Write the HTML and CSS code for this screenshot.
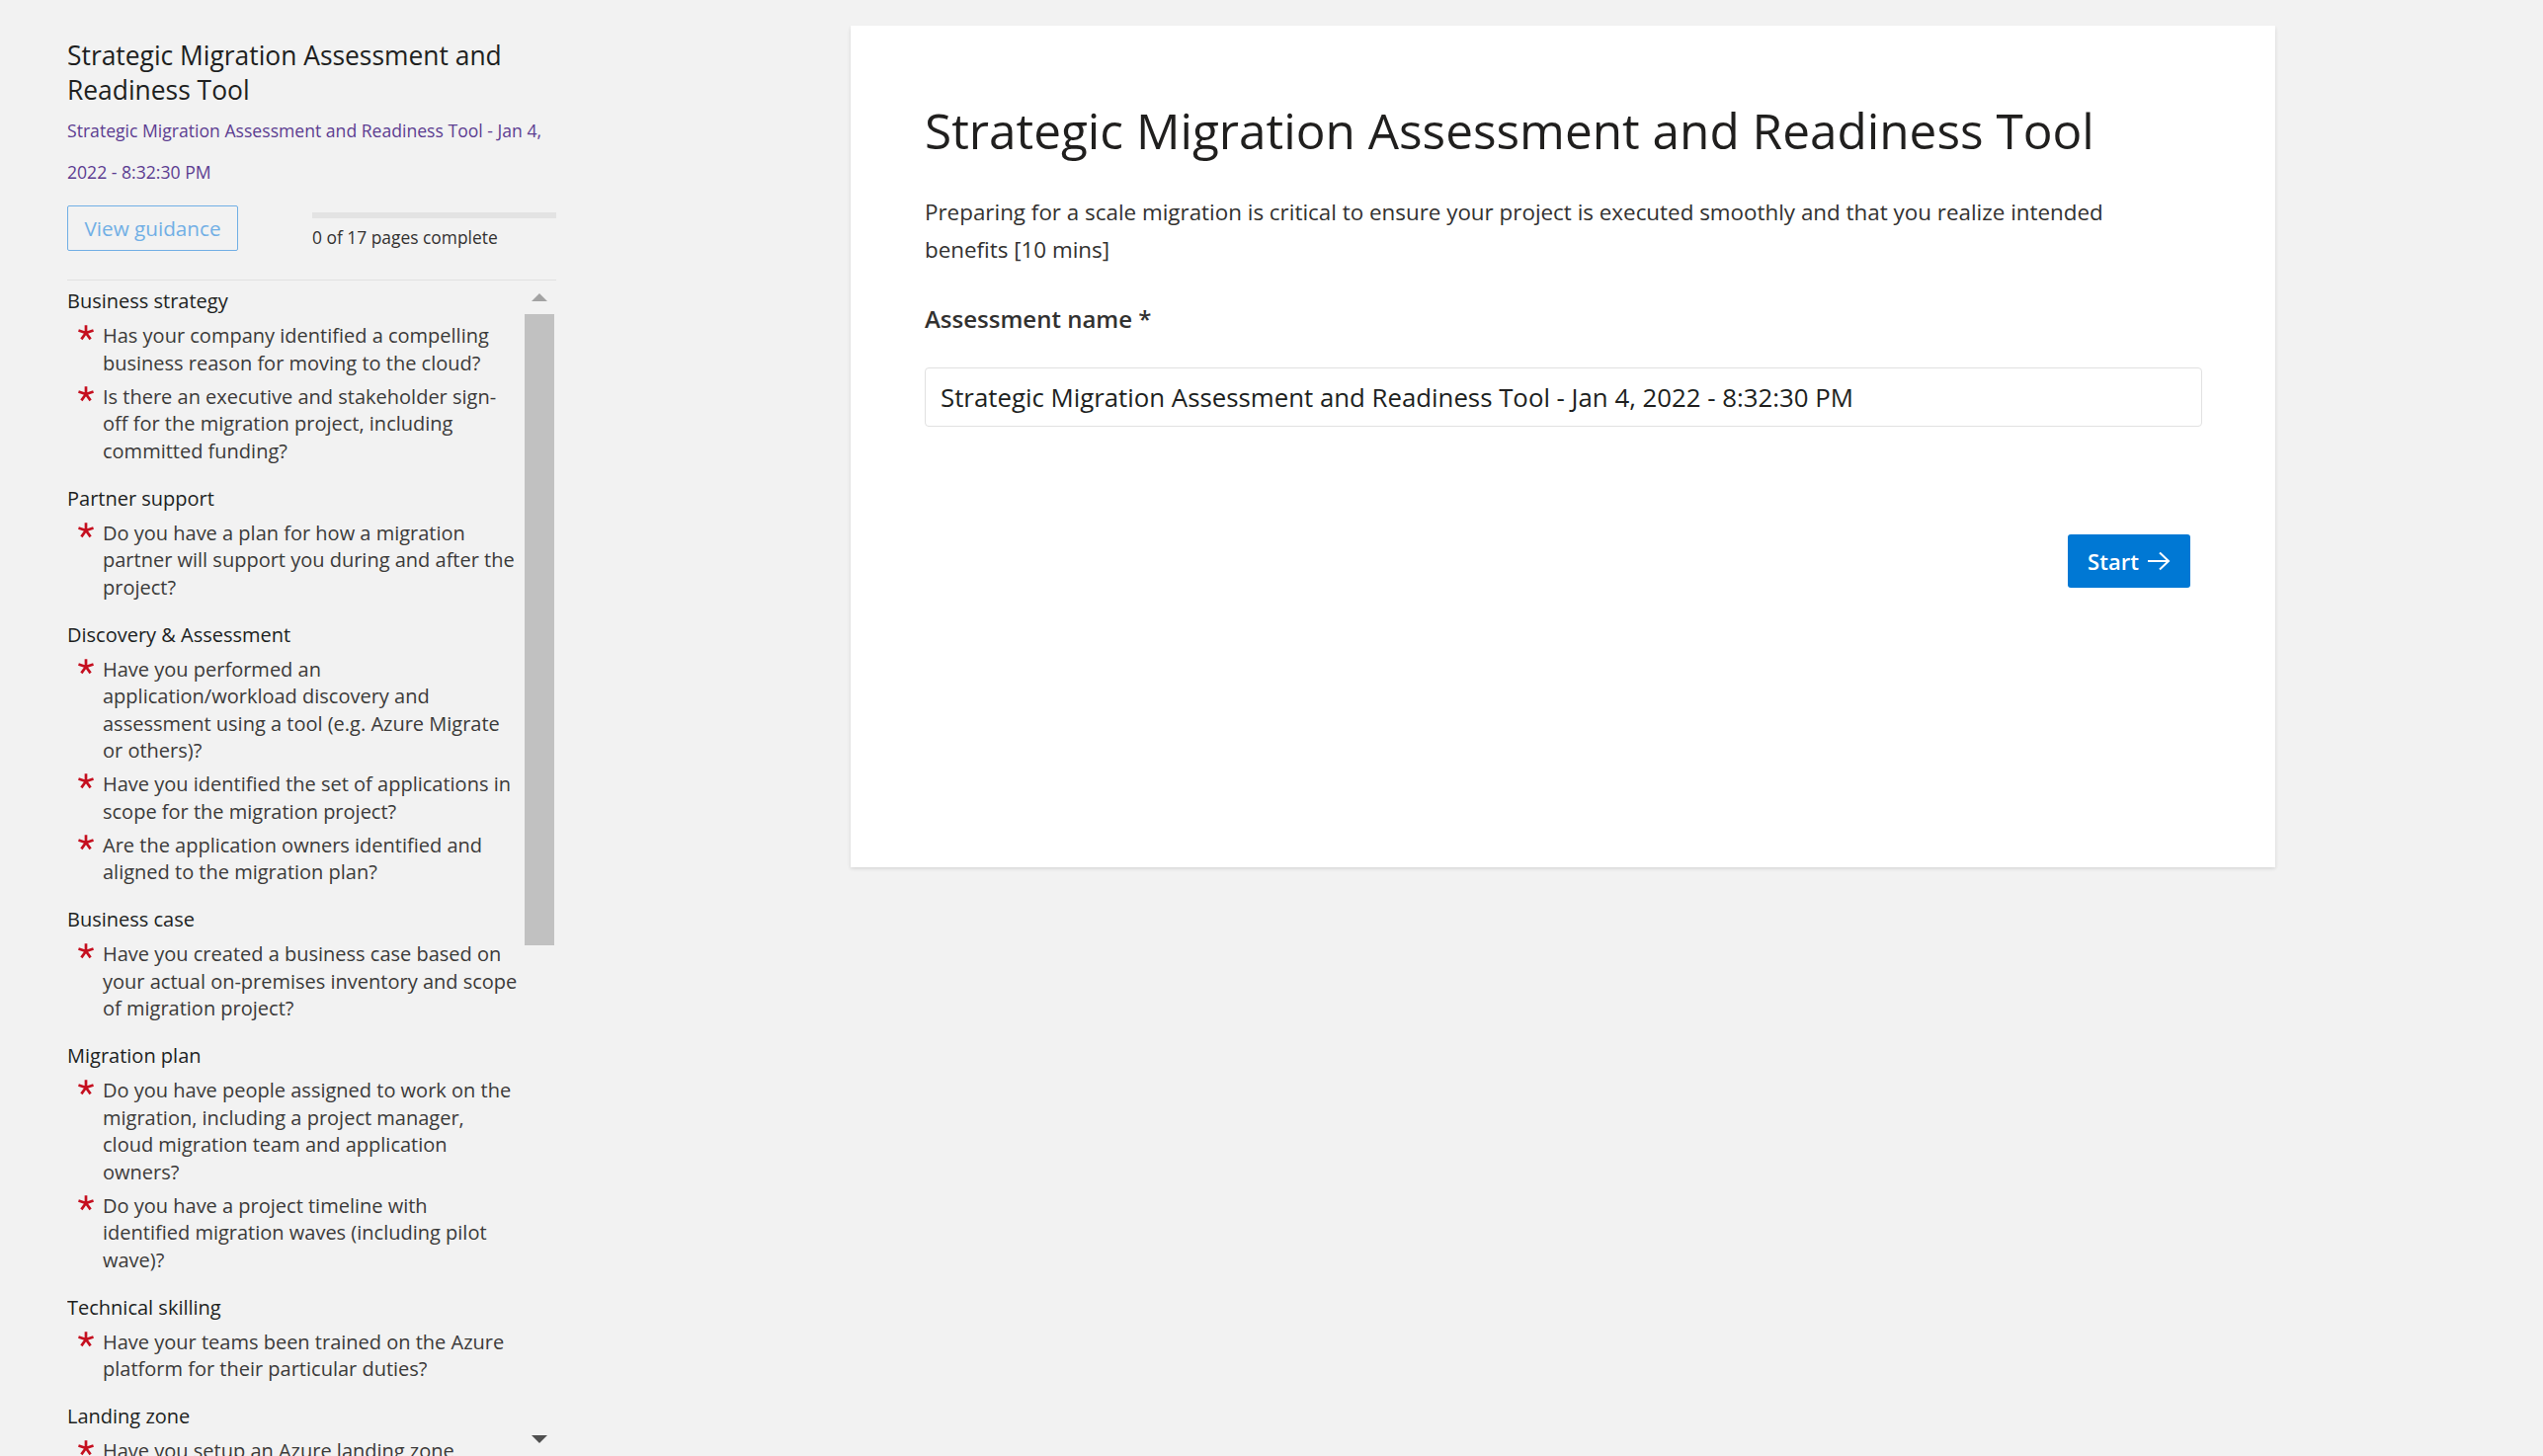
FILE: index.html
```
<!DOCTYPE html>
<html lang="en">
<head>
<meta charset="utf-8">
<title>Strategic Migration Assessment and Readiness Tool</title>
<link rel="stylesheet" href="styles.css">
</head>
<body>
<div class="app">
  <aside class="sidebar">
    <h1 class="side-title">Strategic Migration Assessment and Readiness Tool</h1>
    <div class="side-sub">Strategic Migration Assessment and Readiness Tool - Jan 4, 2022 - 8:32:30 PM</div>
    <div class="side-actions">
      <button class="guide-btn">View guidance</button>
      <div class="progress">
        <div class="progress-track"></div>
        <div class="progress-text">0 of 17 pages complete</div>
      </div>
    </div>
    <div class="nav-wrap">
      <div class="nav">
        <section class="sec">
          <div class="sec-title">Business strategy</div>
          <ul class="qs">
            <li class="q"><svg class="ast" viewBox="0 0 16 16"><path d="M8 1v7M8 8l6.7-2.2M8 8l4.1 5.7M8 8l-4.1 5.7M8 8L1.3 5.8"/></svg><span>Has your company identified a compelling<br>business reason for moving to the cloud?</span></li>
            <li class="q"><svg class="ast" viewBox="0 0 16 16"><path d="M8 1v7M8 8l6.7-2.2M8 8l4.1 5.7M8 8l-4.1 5.7M8 8L1.3 5.8"/></svg><span>Is there an executive and stakeholder sign-<br>off for the migration project, including<br>committed funding?</span></li>
          </ul>
        </section>
        <section class="sec">
          <div class="sec-title">Partner support</div>
          <ul class="qs">
            <li class="q"><svg class="ast" viewBox="0 0 16 16"><path d="M8 1v7M8 8l6.7-2.2M8 8l4.1 5.7M8 8l-4.1 5.7M8 8L1.3 5.8"/></svg><span>Do you have a plan for how a migration<br>partner will support you during and after the<br>project?</span></li>
          </ul>
        </section>
        <section class="sec">
          <div class="sec-title">Discovery &amp; Assessment</div>
          <ul class="qs">
            <li class="q"><svg class="ast" viewBox="0 0 16 16"><path d="M8 1v7M8 8l6.7-2.2M8 8l4.1 5.7M8 8l-4.1 5.7M8 8L1.3 5.8"/></svg><span>Have you performed an<br>application/workload discovery and<br>assessment using a tool (e.g. Azure Migrate<br>or others)?</span></li>
            <li class="q"><svg class="ast" viewBox="0 0 16 16"><path d="M8 1v7M8 8l6.7-2.2M8 8l4.1 5.7M8 8l-4.1 5.7M8 8L1.3 5.8"/></svg><span>Have you identified the set of applications in<br>scope for the migration project?</span></li>
            <li class="q"><svg class="ast" viewBox="0 0 16 16"><path d="M8 1v7M8 8l6.7-2.2M8 8l4.1 5.7M8 8l-4.1 5.7M8 8L1.3 5.8"/></svg><span>Are the application owners identified and<br>aligned to the migration plan?</span></li>
          </ul>
        </section>
        <section class="sec">
          <div class="sec-title">Business case</div>
          <ul class="qs">
            <li class="q"><svg class="ast" viewBox="0 0 16 16"><path d="M8 1v7M8 8l6.7-2.2M8 8l4.1 5.7M8 8l-4.1 5.7M8 8L1.3 5.8"/></svg><span>Have you created a business case based on<br>your actual on-premises inventory and scope<br>of migration project?</span></li>
          </ul>
        </section>
        <section class="sec">
          <div class="sec-title">Migration plan</div>
          <ul class="qs">
            <li class="q"><svg class="ast" viewBox="0 0 16 16"><path d="M8 1v7M8 8l6.7-2.2M8 8l4.1 5.7M8 8l-4.1 5.7M8 8L1.3 5.8"/></svg><span>Do you have people assigned to work on the<br>migration, including a project manager,<br>cloud migration team and application<br>owners?</span></li>
            <li class="q"><svg class="ast" viewBox="0 0 16 16"><path d="M8 1v7M8 8l6.7-2.2M8 8l4.1 5.7M8 8l-4.1 5.7M8 8L1.3 5.8"/></svg><span>Do you have a project timeline with<br>identified migration waves (including pilot<br>wave)?</span></li>
          </ul>
        </section>
        <section class="sec">
          <div class="sec-title">Technical skilling</div>
          <ul class="qs">
            <li class="q"><svg class="ast" viewBox="0 0 16 16"><path d="M8 1v7M8 8l6.7-2.2M8 8l4.1 5.7M8 8l-4.1 5.7M8 8L1.3 5.8"/></svg><span>Have your teams been trained on the Azure<br>platform for their particular duties?</span></li>
          </ul>
        </section>
        <section class="sec">
          <div class="sec-title">Landing zone</div>
          <ul class="qs">
            <li class="q"><svg class="ast" viewBox="0 0 16 16"><path d="M8 1v7M8 8l6.7-2.2M8 8l4.1 5.7M8 8l-4.1 5.7M8 8L1.3 5.8"/></svg><span>Have you setup an Azure landing zone<br>based on the Cloud Adoption Framework?</span></li>
          </ul>
        </section>
      </div>
      <div class="scrollbar">
        <div class="sb-btn"><span class="tri-up"></span></div>
        <div class="sb-thumb"></div>
        <div class="sb-fill"></div>
        <div class="sb-btn"><span class="tri-down"></span></div>
      </div>
    </div>
  </aside>
  <main class="main">
    <div class="card">
      <h2 class="card-title">Strategic Migration Assessment and Readiness Tool</h2>
      <p class="card-desc">Preparing for a scale migration is critical to ensure your project is executed smoothly and that you realize intended benefits [10 mins]</p>
      <label class="field-label" for="aname">Assessment name *</label>
      <input id="aname" class="field-input" type="text" value="Strategic Migration Assessment and Readiness Tool - Jan 4, 2022 - 8:32:30 PM">
      <div class="card-actions">
        <button class="start-btn">Start <svg class="arrow" viewBox="0 0 24 20"><path d="M1 10h21M13 1.5l9 8.5-9 8.5"/></svg></button>
      </div>
    </div>
  </main>
</div>
</body>
</html>
```
FILE: styles.css
```
* { box-sizing: border-box; }
html, body { margin: 0; padding: 0; height: 100%; }
body {
  background: #f2f2f2;
  font-family: "Open Sans", "Noto Sans", sans-serif;
  color: #323130;
  overflow: hidden;
}
.app { display: flex; height: 1474px; }

.sidebar {
  width: 590px;
  flex: none;
  padding: 38.5px 27px 0 68px;
  display: flex;
  flex-direction: column;
  height: 100%;
}
.side-title {
  margin: 0;
  font-size: 26.4px;
  line-height: 35px;
  font-weight: 400;
  color: #201f1e;
}
.side-sub {
  margin-top: 2px;
  max-width: 492px;
  font-size: 17.6px;
  line-height: 42px;
  color: #5c3d91;
}
.side-actions {
  margin-top: 13px;
  display: flex;
  justify-content: space-between;
  align-items: flex-start;
}
.guide-btn {
  width: 173px;
  height: 46px;
  border: 1px solid #71afe5;
  border-radius: 2px;
  background: transparent;
  color: #71afe5;
  font-family: inherit;
  font-size: 20.7px;
  padding: 0;
}
.progress { width: 247px; padding-top: 7px; }
.progress-track { height: 6px; background: #e3e3e3; }
.progress-text {
  margin-top: 7.5px;
  font-size: 17.4px;
  line-height: 24px;
  color: #323130;
}

.nav-wrap {
  margin-top: 29px;
  border-top: 1px solid #e1e1e1;
  flex: 1;
  min-height: 0;
  display: flex;
}
.nav {
  flex: 1;
  min-width: 0;
  overflow: hidden;
  padding-top: 7.5px;
}
.sec { margin-bottom: 20.5px; }
.sec-title {
  font-size: 20px;
  line-height: 27.5px;
  color: #201f1e;
  font-weight: 500;
}
.qs {
  list-style: none;
  margin: 7.5px 0 0;
  padding: 0;
  display: flex;
  flex-direction: column;
  gap: 6.5px;
}
.q {
  display: flex;
  align-items: flex-start;
  font-size: 20px;
  line-height: 27.5px;
  color: #3b3a39;
}
.q span { white-space: nowrap; }
.ast {
  flex: none;
  width: 18px;
  height: 18px;
  margin: 2px 8.5px 0 9.5px;
  fill: none;
  stroke: #c50f1f;
  stroke-width: 2.4;
  stroke-linecap: butt;
}

.scrollbar {
  width: 30px;
  flex: none;
  display: flex;
  flex-direction: column;
  margin-right: 2px;
}
.sb-btn {
  height: 34px;
  flex: none;
  display: flex;
  align-items: center;
  justify-content: center;
}
.tri-up {
  width: 0; height: 0;
  border-left: 8px solid transparent;
  border-right: 8px solid transparent;
  border-bottom: 8px solid #a3a3a3;
}
.tri-down {
  width: 0; height: 0;
  border-left: 8px solid transparent;
  border-right: 8px solid transparent;
  border-top: 8px solid #505050;
}
.sb-thumb { height: 639px; background: #c1c1c1; flex: none; }
.sb-fill { flex: 1; }

.main { flex: 1; min-width: 0; }
.card {
  width: 1442px;
  height: 852px;
  margin: 26px auto 0;
  background: #fff;
  box-shadow: 0 1.6px 3.6px rgba(0,0,0,.13), 0 0.3px 0.9px rgba(0,0,0,.11);
  padding: 75.5px 74px 0 75px;
  display: flex;
  flex-direction: column;
}
.card-title {
  margin: 0;
  font-size: 49.5px;
  line-height: 60px;
  font-weight: 500;
  color: #201f1e;
}
.card-desc {
  margin: 34px 0 0;
  max-width: 1262px;
  font-size: 22.4px;
  line-height: 38px;
  color: #323130;
}
.field-label {
  display: block;
  margin-top: 36px;
  font-size: 24px;
  line-height: 30px;
  font-weight: 600;
  color: #323130;
}
.field-input {
  margin-top: 34.5px;
  width: 100%;
  height: 60px;
  border: 1px solid #e1e1e1;
  border-radius: 4px;
  padding: 0 15px;
  font-family: inherit;
  font-size: 25.8px;
  color: #201f1e;
  background: #fff;
  outline: none;
}
.card-actions {
  display: flex;
  justify-content: flex-end;
  margin-top: 109px;
  padding-right: 12px;
}
.start-btn {
  width: 124px;
  height: 54px;
  background: #0078d4;
  border: none;
  border-radius: 3px;
  color: #fff;
  font-family: inherit;
  font-size: 22px;
  font-weight: 600;
  display: flex;
  align-items: center;
  justify-content: center;
  gap: 8px;
  padding: 0;
}
.arrow {
  width: 24px;
  height: 20px;
  fill: none;
  stroke: #fff;
  stroke-width: 2;
}
```
